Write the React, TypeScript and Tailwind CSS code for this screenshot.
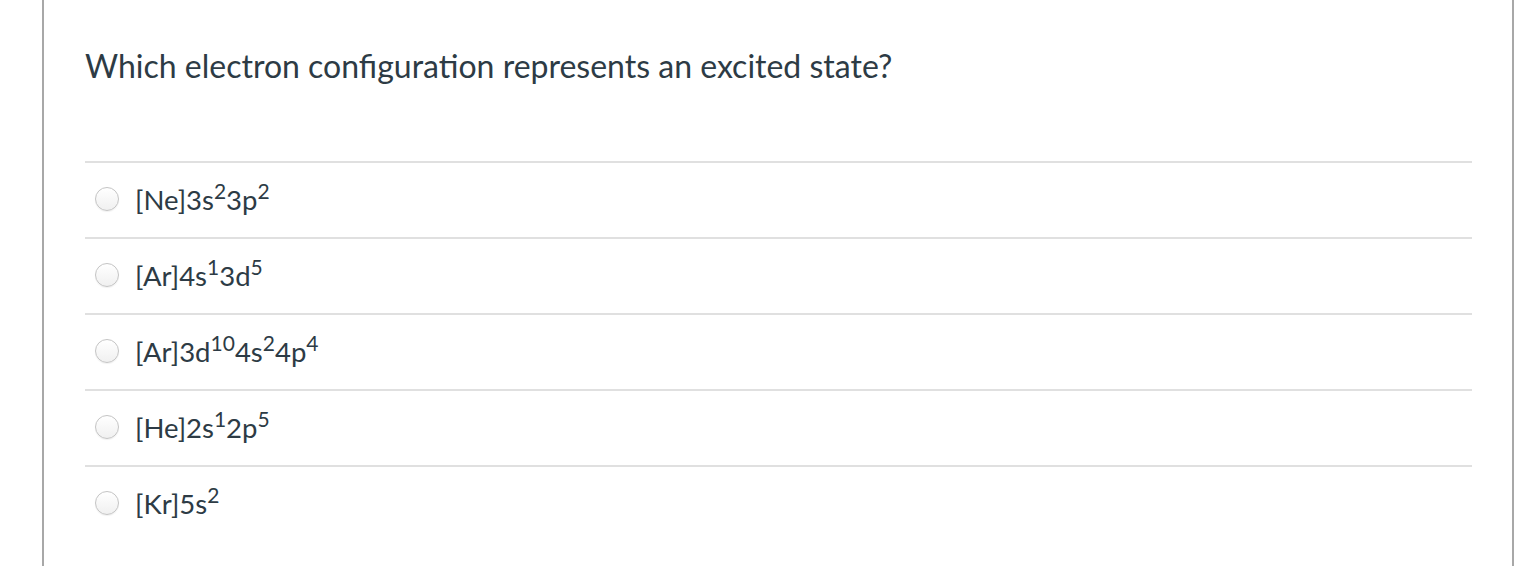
import React from "react";

const options: { parts: [string, string][] }[] = [
  { parts: [["[Ne]3s", "2"], ["3p", "2"]] },
  { parts: [["[Ar]4s", "1"], ["3d", "5"]] },
  { parts: [["[Ar]3d", "10"], ["4s", "2"], ["4p", "4"]] },
  { parts: [["[He]2s", "1"], ["2p", "5"]] },
  { parts: [["[Kr]5s", "2"]] },
];

function Radio() {
  return (
    <span className="inline-block w-[24px] h-[24px] -mt-[2px] rounded-full border border-[#c4c4c4] bg-gradient-to-b from-[#ffffff] to-[#f0f0f0] shadow-[0_1px_1px_rgba(0,0,0,0.06)] shrink-0" />
  );
}

export default function App() {
  return (
    <div className="w-[1530px] h-[566px] bg-white overflow-hidden font-[Lato,'Noto_Sans',sans-serif]">
      <div className="ml-[42px] w-[1472px] h-[566px] border-l-2 border-r-2 border-[#a8a8a8] pl-[41px] pr-[40px] text-[#2d3b45]">
        <div className="pt-[44px] text-[32px] leading-[44px]">
          Which electron configuration represents an excited state?
        </div>
        <div className="mt-[73px]">
          {options.map((o, i) => (
            <div key={i} className="border-t-2 border-[#e0e0e0] h-[76px] flex items-center pl-[10px] gap-[16px]">
              <Radio />
              <span className="text-[27.5px] leading-[30px] -mt-[1px]">
                {o.parts.map(([b, s], j) => (
                  <React.Fragment key={j}>
                    {b}
                    <sup className="text-[21px] top-[-0.5em]">{s}</sup>
                  </React.Fragment>
                ))}
              </span>
            </div>
          ))}
        </div>
      </div>
    </div>
  );
}
